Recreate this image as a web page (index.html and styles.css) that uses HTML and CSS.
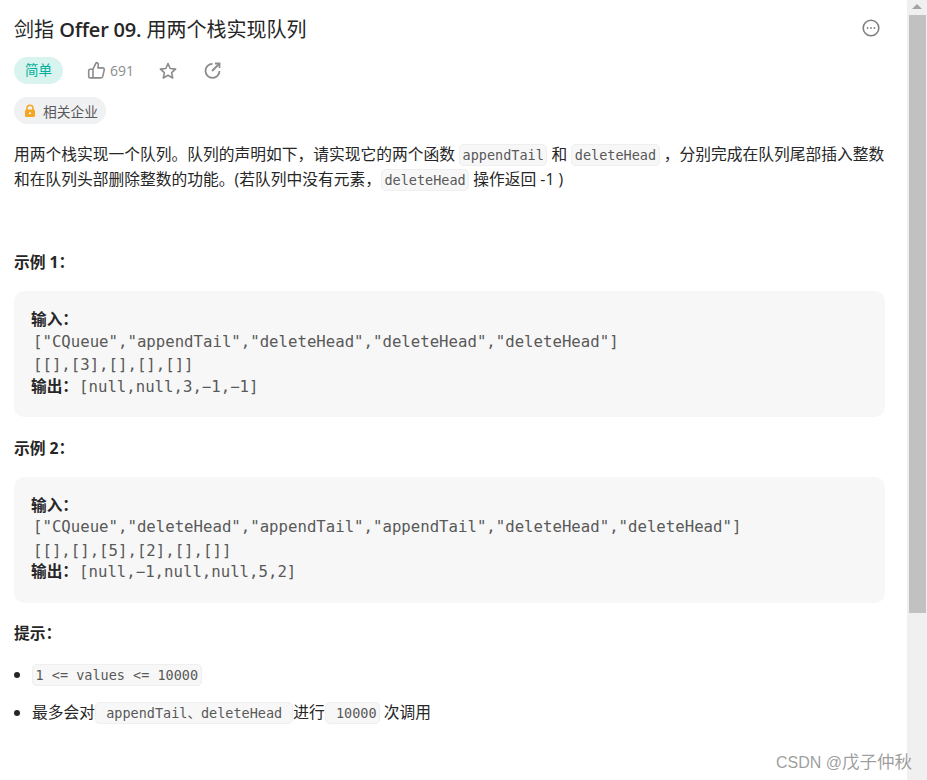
FILE: index.html
```html
<!DOCTYPE html>
<html lang="zh-CN">
<head>
    <meta charset="UTF-8">
    <title>剑指 Offer 09. 用两个栈实现队列</title>
    <link rel="stylesheet" href="styles.css">
</head>
<body>
    <div class="page">
        <main class="content">
            <div class="title-row">
                <h1>剑指 <b>Offer 09.</b> 用两个栈实现队列</h1>
                <svg class="more-icon" width="20" height="20" viewBox="0 0 20 20" fill="none" stroke="#7f7f7f" stroke-width="1.6">
                    <circle cx="10" cy="10" r="7.8"/>
                    <circle cx="6.6" cy="10" r=".9" fill="#7f7f7f" stroke="none"/>
                    <circle cx="10" cy="10" r=".9" fill="#7f7f7f" stroke="none"/>
                    <circle cx="13.4" cy="10" r=".9" fill="#7f7f7f" stroke="none"/>
                </svg>
            </div>

            <div class="meta-row">
                <span class="badge-easy">简单</span>
                <span class="likes">
                    <svg width="19" height="19" viewBox="0 0 19 19" fill="none" stroke="#8c8c8c" stroke-width="1.6" stroke-linejoin="round">
                        <path d="M6 8.200 9.200 1.600c1.500 0 2.300 1 2.100 2.400L10.900 6.900h4.600c1.200 0 2 1.100 1.700 2.200l-1.500 6.300c-.2.900-1 1.500-1.900 1.500H6z"/>
                        <path d="M6 8.200H3.200c-.9 0-1.500.6-1.500 1.500v5.700c0 .9.600 1.500 1.500 1.500H6"/>
                    </svg>
                    691
                </span>
                <svg class="star-icon" width="18" height="18" viewBox="0 0 18 18" fill="none" stroke="#8c8c8c" stroke-width="1.6" stroke-linejoin="round">
                    <path d="M9 1.500 11.200 6.500 16.600 7.100 12.600 10.700 13.700 16 9 13.300 4.300 16 5.400 10.700 1.400 7.100 6.800 6.500z"/>
                </svg>
                <svg class="share-icon" width="17" height="17" viewBox="0 0 17 17" fill="none" stroke="#8c8c8c" stroke-width="1.8">
                    <path d="M8.500 1.900a7 7 0 1 0 7 7"/>
                    <path d="M8 9 15 2"/>
                    <path d="M11 1.500h4.500V6"/>
                </svg>
            </div>

            <div class="company-tag">
                <svg width="12" height="14" viewBox="0 0 12 14" fill="none">
                    <path d="M3 6.500V4.200a3 3 0 0 1 6 0v2.300" stroke="#f5a623" stroke-width="1.600"/>
                    <rect x="1" y="5.500" width="10" height="7.500" rx="1.500" fill="#f5a623"/>
                    <circle cx="6" cy="9.200" r="1" fill="#fff"/>
                </svg>
                相关企业
            </div>

            <p class="desc">用两个栈实现一个队列。队列的声明如下，请实现它的两个函数 <code>appendTail</code> 和 <code>deleteHead</code> ，分别完成在队列尾部插入整数和在队列头部删除整数的功能。(若队列中没有元素，<code>deleteHead</code> 操作返回 -1 )</p>

            <p class="example-title first">示例 1：</p>
            <div class="sample">
                <strong>输入：</strong>
                <span class="line">["CQueue","appendTail","deleteHead","deleteHead","deleteHead"]</span>
                <span class="line args">[[],[3],[],[],[]]</span>
                <div class="output"><strong>输出：</strong><span>[null,null,3,−1,−1]</span></div>
            </div>

            <p class="example-title">示例 2：</p>
            <div class="sample">
                <strong>输入：</strong>
                <span class="line">["CQueue","deleteHead","appendTail","appendTail","deleteHead","deleteHead"]</span>
                <span class="line args">[[],[],[5],[2],[],[]]</span>
                <div class="output"><strong>输出：</strong><span>[null,−1,null,null,5,2]</span></div>
            </div>

            <p class="example-title">提示：</p>
            <ul class="hints">
                <li><code>1 &lt;= values &lt;= 10000</code></li>
                <li>最多会对<code class="spaced"> appendTail、deleteHead </code>进行<code class="spaced"> 10000</code> 次调用</li>
            </ul>
        </main>

        <div class="scrollbar">
            <div class="scroll-arrow"></div>
            <div class="scroll-thumb"></div>
        </div>
    </div>
    <div class="watermark">CSDN @<span>戊子仲秋</span></div>
</body>
</html>
```

FILE: styles.css
```css
:root {
    --text-main: #262626;
    --text-muted: #8c8c8c;
    --code-bg: #f7f7f7;
    --code-text: #595959;
    --sans: "Open Sans", "Noto Sans CJK SC", sans-serif;
    --mono: "DejaVu Sans Mono", "Noto Sans CJK SC", monospace;
}

html, body {
    margin: 0;
    height: 100%;
    overflow: hidden;
}

body {
    font-family: var(--sans);
    color: var(--text-main);
    background-color: #fff;
}

.page {
    display: flex;
    height: 780px;
}

.content {
    flex: 1;
    min-width: 0;
    padding: 16px 22px 0 14px;
}

/* header */
.title-row {
    display: flex;
    justify-content: space-between;
    align-items: center;
    height: 28px;
}

.title-row h1 {
    margin: 0;
    font-size: 20px;
    font-weight: 400;
    line-height: 28px;
}

.title-row b {
    font-weight: 600;
    letter-spacing: -.2px;
}

.more-icon {
    margin-right: 4px;
    margin-top: -5px;
}

.meta-row {
    display: flex;
    align-items: center;
    margin-top: 13px;
    height: 27px;
}

.badge-easy {
    width: 49px;
    height: 27px;
    line-height: 27px;
    text-align: center;
    border-radius: 14px;
    font-size: 13.5px;
    color: #00af9b;
    background-color: #d9f4ef;
}

.likes {
    display: flex;
    align-items: center;
    gap: 4px;
    margin-left: 24px;
    font-size: 14px;
    color: var(--text-muted);
}

.star-icon {
    margin-left: 25px;
}

.share-icon {
    margin-left: 27px;
}

.company-tag {
    display: inline-flex;
    align-items: center;
    gap: 7px;
    margin-top: 13px;
    height: 27px;
    padding: 0 8px 0 10px;
    border-radius: 14px;
    font-size: 13.75px;
    color: #595959;
    background-color: #f0f1f3;
}

/* description */
.desc {
    margin: 18px -2px 0 0;
    font-size: 15.75px;
    line-height: 24px;
}

code {
    font-family: var(--mono);
    font-size: 13.5px;
    padding: 2px 2.5px;
    color: var(--code-text);
    background-color: var(--code-bg);
    border: 1px solid #efefef;
    border-radius: 5px;
}

code.spaced {
    white-space: pre;
    padding: 2px;
}

.example-title {
    margin: 18.5px 0 0;
    font-size: 15.75px;
    line-height: 24px;
    font-weight: 700;
}

.example-title.first {
    margin-top: 58px;
}

.sample {
    margin: 17px 0 0;
    padding: 18px 17px 20px;
    font-size: 15.7px;
    line-height: 21.5px;
    background-color: var(--code-bg);
    border-radius: 10px;
}

.sample strong {
    display: block;
    font-weight: 700;
    color: var(--text-main);
}

.sample .line,
.output span {
    font-family: var(--mono);
    color: var(--code-text);
    white-space: pre;
}

.line {
    display: block;
    margin-left: 2px;
}

.line.args {
    margin-top: 2px;
}

.output {
    display: flex;
}

.output span {
    margin-left: 1px;
}

.hints {
    margin: 17px 0 0;
    padding-left: 18px;
    font-size: 15.75px;
    line-height: 24px;
}

.hints li {
    margin-bottom: 12.5px;
}

/* window scrollbar */
.scrollbar {
    flex: none;
    display: flex;
    flex-direction: column;
    align-items: center;
    width: 20px;
    background-color: #f0f0f0;
}

.scroll-arrow {
    margin-top: 4px;
    border-left: 5px solid transparent;
    border-right: 5px solid transparent;
    border-bottom: 5px solid #a3a3a3;
}

.scroll-thumb {
    width: 17px;
    height: 598px;
    margin-top: 6px;
    background-color: #c1c1c1;
}

.watermark {
    position: absolute;
    right: 15px;
    bottom: 7px;
    font-family: "Liberation Sans", "Noto Sans CJK SC", sans-serif;
    font-size: 16px;
    color: rgba(90, 90, 90, .6);
}

.watermark span {
    font-size: 17.5px;
}
```
